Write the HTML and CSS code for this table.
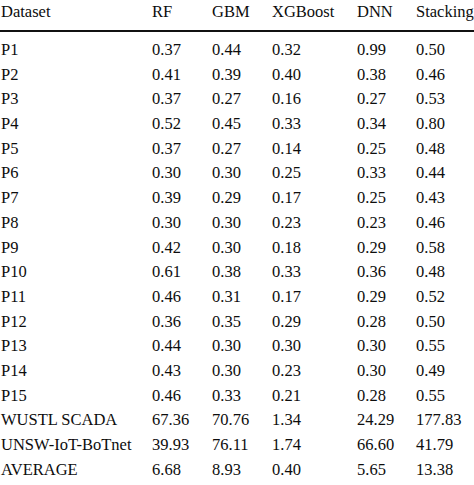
FILE: index.html
```html
<!DOCTYPE html>
<html>
<head>
<meta charset="utf-8">
<link rel="stylesheet" href="styles.css">
</head>
<body>
<div class="table">
  <div class="row head">
    <span>Dataset</span><span>RF</span><span>GBM</span><span>XGBoost</span><span>DNN</span><span>Stacking</span>
  </div>
  <div class="body">
    <div class="row"><span>P1</span><span>0.37</span><span>0.44</span><span>0.32</span><span>0.99</span><span>0.50</span></div>
    <div class="row"><span>P2</span><span>0.41</span><span>0.39</span><span>0.40</span><span>0.38</span><span>0.46</span></div>
    <div class="row"><span>P3</span><span>0.37</span><span>0.27</span><span>0.16</span><span>0.27</span><span>0.53</span></div>
    <div class="row"><span>P4</span><span>0.52</span><span>0.45</span><span>0.33</span><span>0.34</span><span>0.80</span></div>
    <div class="row"><span>P5</span><span>0.37</span><span>0.27</span><span>0.14</span><span>0.25</span><span>0.48</span></div>
    <div class="row"><span>P6</span><span>0.30</span><span>0.30</span><span>0.25</span><span>0.33</span><span>0.44</span></div>
    <div class="row"><span>P7</span><span>0.39</span><span>0.29</span><span>0.17</span><span>0.25</span><span>0.43</span></div>
    <div class="row"><span>P8</span><span>0.30</span><span>0.30</span><span>0.23</span><span>0.23</span><span>0.46</span></div>
    <div class="row"><span>P9</span><span>0.42</span><span>0.30</span><span>0.18</span><span>0.29</span><span>0.58</span></div>
    <div class="row"><span>P10</span><span>0.61</span><span>0.38</span><span>0.33</span><span>0.36</span><span>0.48</span></div>
    <div class="row"><span>P11</span><span>0.46</span><span>0.31</span><span>0.17</span><span>0.29</span><span>0.52</span></div>
    <div class="row"><span>P12</span><span>0.36</span><span>0.35</span><span>0.29</span><span>0.28</span><span>0.50</span></div>
    <div class="row"><span>P13</span><span>0.44</span><span>0.30</span><span>0.30</span><span>0.30</span><span>0.55</span></div>
    <div class="row"><span>P14</span><span>0.43</span><span>0.30</span><span>0.23</span><span>0.30</span><span>0.49</span></div>
    <div class="row"><span>P15</span><span>0.46</span><span>0.33</span><span>0.21</span><span>0.28</span><span>0.55</span></div>
    <div class="row"><span>WUSTL SCADA</span><span>67.36</span><span>70.76</span><span>1.34</span><span>24.29</span><span>177.83</span></div>
    <div class="row"><span>UNSW-IoT-BoTnet</span><span>39.93</span><span>76.11</span><span>1.74</span><span>66.60</span><span>41.79</span></div>
    <div class="row"><span>AVERAGE</span><span>6.68</span><span>8.93</span><span>0.40</span><span>5.65</span><span>13.38</span></div>
  </div>
</div>
</body>
</html>
```

FILE: styles.css
```css
html, body {
  margin: 0;
  padding: 0;
  background: #ffffff;
}
body {
  font-family: "Liberation Serif", "Times New Roman", serif;
  font-size: 16.5px;
  color: #0d0d0d;
  width: 474px;
  height: 485px;
  overflow: hidden;
}
.table {
  width: 474px;
}
.row {
  display: grid;
  grid-template-columns: 152px 60px 60px 85px 59px 1fr;
  height: 24.7px;
  line-height: 24.7px;
  white-space: nowrap;
}
.row span:first-child {
  padding-left: 1px;
}
.head {
  height: 30px;
  border-bottom: 2px solid #111111;
  box-sizing: content-box;
}
.body {
  padding-top: 6px;
}
```
